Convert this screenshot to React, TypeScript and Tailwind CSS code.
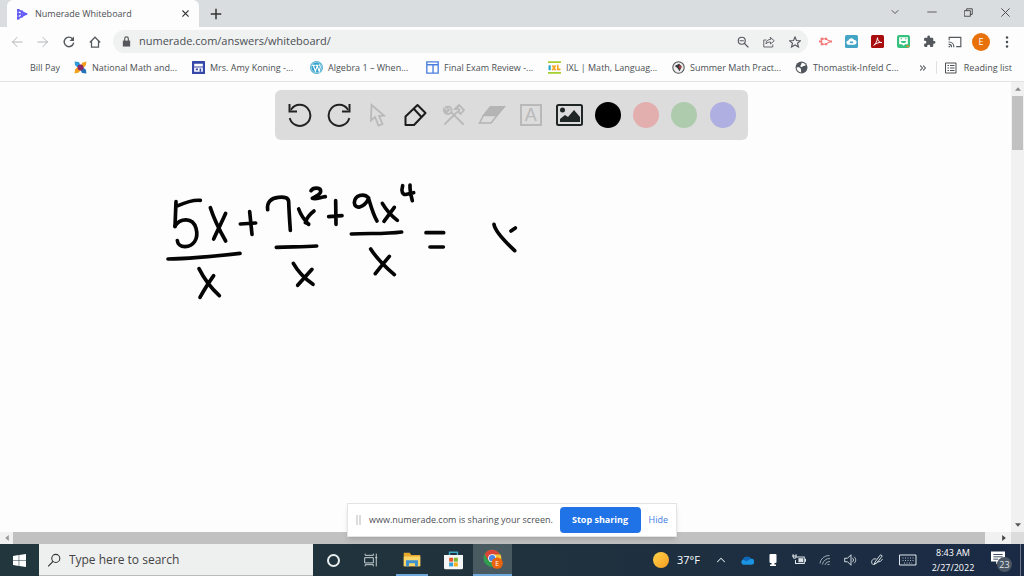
import React from 'react';
import { ChevronDown, ChevronUp, ChevronsRight } from 'lucide-react';

type IconProps = { className?: string; children?: React.ReactNode; viewBox?: string };

const Line: React.FC<IconProps> = ({ className = 'w-4 h-4', viewBox = '0 0 24 24', children }) => (
  <svg className={className} viewBox={viewBox} fill="none" stroke="currentColor" strokeWidth={2} strokeLinecap="square" aria-hidden="true">
    {children}
  </svg>
);

const bookmarks = [
  {
    label: 'National Math and...',
    width: 'w-[118px]',
    icon: (
      <svg viewBox="0 0 24 24" className="w-[13px] h-[13px] shrink-0">
        <path d="M1 1l8 1 4 7-5 4-6-5z" fill="#2f9bd8" />
        <path d="M23 1l-8 2-3 6 5 4 5-5z" fill="#f5a11c" />
        <path d="M1 23l8-2 4-6-5-5-6 5z" fill="#f5a11c" />
        <path d="M23 23l-8-1-4-7 5-4 6 5z" fill="#2673b8" />
        <circle cx="12" cy="12" r="5.5" fill="#8a2766" />
      </svg>
    ),
  },
  {
    label: 'Mrs. Amy Koning -...',
    width: 'w-[118px]',
    icon: (
      <svg viewBox="0 0 24 24" className="w-[13px] h-[13px] shrink-0">
        <rect width="24" height="24" rx="1" fill="#3547a8" />
        <path d="M4 5h16v5H4zM4 12h16v8H4z" fill="#fff" />
        <path d="M7 14h4v3H7zM14 14h3v6h-3z" fill="#3547a8" />
      </svg>
    ),
  },
  {
    label: 'Algebra 1 – When...',
    width: 'w-[116px]',
    icon: (
      <svg viewBox="0 0 24 24" className="w-[13px] h-[13px] shrink-0">
        <circle cx="12" cy="12" r="12" fill="#38a3cb" />
        <circle cx="12" cy="12" r="10" fill="none" stroke="#fff" strokeWidth="1" />
        <path d="M4 8h5M6 8l4 11 3-9M10 8h6M13 8l4 11 2-8c0-2-2-3-1-5" fill="none" stroke="#fff" strokeWidth="2" />
      </svg>
    ),
  },
  {
    label: 'Final Exam Review -...',
    width: 'w-[122px]',
    icon: (
      <svg viewBox="0 0 24 24" className="w-[13px] h-[13px] shrink-0" fill="none" stroke="#4a7ede" strokeWidth="2.5">
        <path d="M1.5 1.5h21v21h-21zM1.5 7h21M13 7v15" />
      </svg>
    ),
  },
  {
    label: 'IXL | Math, Languag...',
    width: 'w-[124px]',
    icon: (
      <svg viewBox="0 0 24 24" className="w-[13px] h-[13px] shrink-0" fill="none" strokeWidth="3">
        <path d="M0 2h24M0 22h24" stroke="#a4cf2c" />
        <path d="M3 8v9" stroke="#1fa5c8" strokeWidth="4" />
        <path d="M8 8l6 9M14 8l-6 9M18 7v8.5h5" stroke="#f3a51b" />
      </svg>
    ),
  },
  {
    label: 'Summer Math Pract...',
    width: 'w-[123px]',
    icon: (
      <svg viewBox="0 0 24 24" className="w-[13px] h-[13px] shrink-0">
        <circle cx="12" cy="12" r="10.5" fill="#eee" stroke="#555" strokeWidth="2" />
        <path d="M5 9l8-4 5 5-4 9-4-6z" fill="#35363c" />
        <path d="M12 8l6 2-4 5z" fill="#b53a3a" />
      </svg>
    ),
  },
  {
    label: 'Thomastik-Infeld C...',
    width: 'w-[112px]',
    icon: (
      <svg viewBox="0 0 24 24" className="w-[13px] h-[13px] shrink-0">
        <circle cx="12" cy="12" r="11" fill="#50555b" />
        <path d="M3 12c4-1 7 0 8 3s-1 4 1 6c-5 0-9-4-9-9zM12 3c4 0 7 2 8 5-3 2-5 0-6 2s-4 1-4-1 3-3 2-6z" fill="#fff" />
      </svg>
    ),
  },
];

const tools = [
  {
    label: 'Undo',
    color: 'text-[#222]',
    icon: (
      <Line className="w-6 h-6">
        <path d="M2 16a10.500 10.500 0 1 0 1.500-10" />
        <path d="M1.500 2v6.500h6.500" />
      </Line>
    ),
  },
  {
    label: 'Redo',
    color: 'text-[#222]',
    icon: (
      <Line className="w-6 h-6">
        <path d="M22 16a10.500 10.500 0 1 1-1.500-10" />
        <path d="M22.500 2v6.500h-6.500" />
      </Line>
    ),
  },
  {
    label: 'Select',
    color: 'text-[#b9b9b9]',
    icon: (
      <Line className="w-6 h-6">
        <path d="M6.500 2l-.5 15.500 4-3.500 3.500 8.500 4-1.500-3.500-8 5-.5z" strokeWidth={1.8} />
      </Line>
    ),
  },
  {
    label: 'Pen',
    color: 'text-[#1c1c1c]',
    icon: (
      <Line className="w-6 h-6">
        <path d="M2.500 22v-8.500L14.500 2l8 8-11.500 12zM11 6l7.500 8" strokeLinejoin="round" />
      </Line>
    ),
  },
  {
    label: 'Tools',
    color: 'text-[#b9b9b9]',
    icon: (
      <Line className="w-6 h-6">
        <path d="M3 21L14.500 9.500M9.500 9.500L21 21M4 4l3 3-2 2-3-3c-.5 4 3 6 6 4.500l1.500-1.500c1-3.500-1.500-6.500-5.500-5zM13 6l4-4 5 5-3.500 4-2.500-2.500 1.500-1.500-2-2-1 1z" strokeWidth={1.8} />
      </Line>
    ),
  },
  {
    label: 'Eraser',
    color: 'text-[#b4b4b4]',
    icon: (
      <svg viewBox="0 0 28 24" className="w-7 h-6">
        <path d="M12 3h15.500l-8.500 10H4z" fill="#b4b4b4" />
        <path d="M5.500 12.500h13.500l-6 7.500H1.500zM19 12.500L27 3" fill="none" stroke="#b4b4b4" strokeWidth="1.500" />
      </svg>
    ),
  },
  {
    label: 'Text',
    color: 'text-[#b9b9b9]',
    icon: (
      <span className="flex items-center justify-center w-[22px] h-[22px] border-2 border-[#b9b9b9] font-['Liberation_Sans'] text-lg leading-none">A</span>
    ),
  },
  {
    label: 'Image',
    color: 'text-[#202526]',
    icon: (
      <svg viewBox="0 0 28 24" className="w-7 h-6">
        <rect x="2" y="2" width="25" height="20" rx="1.500" fill="none" stroke="#202526" strokeWidth="2" />
        <circle cx="7.500" cy="7" r="2.500" fill="#202526" />
        <path d="M5 19v-3l5-4 3 2 6-7 6 7v5z" fill="#202526" />
      </svg>
    ),
  },
];

const colors = [
  { name: 'Black', bg: 'bg-black' },
  { name: 'Red', bg: 'bg-[#e3aeae]' },
  { name: 'Green', bg: 'bg-[#aecbae]' },
  { name: 'Blue', bg: 'bg-[#afafe1]' },
];

const strokes = [
  // 5x over x
  'M78 95L75 170M84 107C104 98 125 89 151 91',
  'M75 168C90 145 128 140 138 175C147 207 130 229 105 230C91 230 83 222 82 212',
  'M181 113C193 150 208 180 227 213M227 130C215 158 202 182 191 207',
  'M54 267C125 266 190 259 270 250',
  'M147 296C165 332 185 356 208 377M191 317C175 340 162 360 150 382',
  'M271 162L317 159M299 125L306 193',
  // 7x^2 over x
  'M353 119C350 97 363 84 385 82C405 80 415 83 416 95C417 125 419 153 421 181',
  'M446 117C452 134 462 149 476 163M492 123C480 132 470 143 466 158L476 162',
  'M483 62C490 51 513 52 512 65C510 75 495 80 487 85C500 88 510 82 526 80',
  'M379 232C420 230 460 231 500 228',
  'M430 280C445 307 465 326 489 343M486 298L443 346',
  'M536 140L576 137M557 92L558 163',
  // 9x^4 over x
  'M656 84C641 68 614 76 613 98C614 119 641 115 656 86C664 113 670 135 681 153',
  'M697 100C708 119 724 137 742 151M733 112L702 154',
  'M758 47C753 64 757 76 770 73L791 68M780 45C779 62 783 77 787 92',
  'M604 192C655 189 705 193 755 186',
  'M662 237C680 265 705 290 733 314M718 259C700 280 688 295 676 311',
  // = and the start of the answer
  'M828 188L881 188M840 231L880 231',
  'M1032 163C1035 185 1065 215 1094 242M1083 183L1096 174',
];

const TabStrip: React.FC = () => (
  <header className="flex h-[27px] shrink-0 bg-[#dadddf] pl-[7px]">
    <div className="flex items-center w-48 rounded-t-md bg-[#fdfdfd] pl-[9px] pr-2">
      <svg viewBox="0 0 24 24" className="w-3 h-3" fill="none" stroke="#625bf5" strokeWidth="3">
        <path d="M4 4l7 3 10 5-10 5-7 4V4M4 12h16M11 7v10" />
        <path d="M2 2h5v5H2zM2 10h5v5H2zM2 18h5v5H2zM10 5h4v4h-4zM10 15h4v4h-4zM18 10h4v4h-4z" fill="#625bf5" stroke="none" />
      </svg>
      <span className="ml-[7px] flex-1 text-[9px] text-[#4c5054] whitespace-nowrap">Numerade Whiteboard</span>
      <button aria-label="Close tab" className="text-[#333] p-0.5">
        <Line className="w-[7px] h-[7px]"><path d="M3 3l18 18M21 3L3 21" strokeWidth={4} /></Line>
      </button>
    </div>
    <button aria-label="New tab" className="w-[34px] flex items-center justify-center text-[#333]">
      <Line className="w-3 h-3"><path d="M12 3v18M3 12h18" strokeWidth={3} /></Line>
    </button>
    <div className="ml-auto flex h-6 text-[#444]">
      <button aria-label="Search tabs" className="w-[37px] flex items-center justify-center"><ChevronDown className="w-3 h-3" strokeWidth={1.8} /></button>
      <button aria-label="Minimize" className="w-[37px] flex items-center justify-center"><Line className="w-2.5 h-2.5"><path d="M2 12h20" /></Line></button>
      <button aria-label="Restore" className="w-[37px] flex items-center justify-center"><Line className="w-[9px] h-[9px]"><path d="M2 7h15v15H2zM7 7V2h15v15h-5" strokeWidth={2.4} /></Line></button>
      <button aria-label="Close" className="w-[37px] flex items-center justify-center"><Line className="w-[9px] h-[9px]"><path d="M2 2l20 20M22 2L2 22" strokeWidth={2.5} /></Line></button>
    </div>
  </header>
);

const AddressBar: React.FC = () => (
  <nav className="flex items-center h-[29px] shrink-0 bg-[#fdfdfd] px-1 text-[#55595d]">
    <button aria-label="Back" className="w-[26px] flex justify-center text-[#b4b6b8]"><Line className="w-3 h-3"><path d="M22 12H3M12 3l-9 9 9 9" /></Line></button>
    <button aria-label="Forward" className="w-[26px] flex justify-center text-[#b4b6b8]"><Line className="w-3 h-3"><path d="M2 12h19M12 3l9 9-9 9" /></Line></button>
    <button aria-label="Reload" className="w-[26px] flex justify-center"><Line className="w-3 h-3"><path d="M21 14.500a9.500 9.500 0 1 1-2-9" strokeWidth={2.8} /><path d="M22 1v9h-9z" fill="currentColor" stroke="none" /></Line></button>
    <button aria-label="Home" className="w-[26px] flex justify-center"><Line className="w-3 h-3"><path d="M2.500 12L12 2.500l9.500 9.500M5 11v11h14V11" strokeWidth={2.5} /></Line></button>
    <div className="ml-[5px] flex flex-1 items-center h-[23px] rounded-full bg-[#f0f2f2] pl-2">
      <svg viewBox="0 0 24 24" className="w-[11px] h-[11px] shrink-0"><path d="M4 10h16v13H4z" fill="#55595d" /><path d="M8 11V6a4 4 0 0 1 8 0v5" fill="none" stroke="#55595d" strokeWidth="2.500" /></svg>
      <input aria-label="Address" defaultValue="numerade.com/answers/whiteboard/" className="ml-[7px] flex-1 bg-transparent text-[11px] text-[#4a4e52] outline-none" />
      <button aria-label="Zoom" className="w-[26px] flex justify-center"><Line className="w-3 h-3"><circle cx="9.500" cy="9.500" r="7" strokeWidth={2.3} /><path d="M15 15l7 7M6.500 9.500h6" strokeWidth={2.3} /></Line></button>
      <button aria-label="Share" className="w-[26px] flex justify-center"><Line className="w-3 h-3"><path d="M6 8H1.500v14h18v-4M15 3l7.500 6.500L15 16v-4c-4 0-7 1-9 4 0-6 4-9 9-9.500z" strokeWidth={1.8} /></Line></button>
      <button aria-label="Bookmark" className="w-[26px] flex justify-center"><Line className="w-3 h-3"><path d="M12 2l3 7 8 .5-6 5 2 7.500-7-4-7 4 2-7.500-6-5L9 9z" strokeWidth={2.2} /></Line></button>
    </div>
    <div className="flex items-center ml-1">
      <button aria-label="Screen capture" className="w-[26px] flex justify-center">
        <svg viewBox="0 0 24 24" className="w-[13px] h-[13px]" fill="none" stroke="#f27676" strokeWidth="2"><path d="M5 7h7l9 5-9 5H5V7M1 12h4" /><path d="M3 5h5v4H3zM0 10h4v4H0zM3 15h5v4H3zM11 5h4v4h-4zM11 15h4v4h-4zM20 10h4v4h-4z" fill="#f27676" stroke="none" /></svg>
      </button>
      <button aria-label="Cloud" className="w-[26px] flex justify-center">
        <svg viewBox="0 0 24 24" className="w-[13px] h-[13px]"><rect width="24" height="24" rx="3" fill="#43a4c6" /><path d="M7 18a4 4 0 0 1-1-8 6 6 0 0 1 11-1 4.500 4.500 0 0 1 0 9z" fill="#fff" /><path d="M9 12h6v3H9z" fill="#43a4c6" /></svg>
      </button>
      <button aria-label="Acrobat" className="w-[26px] flex justify-center">
        <svg viewBox="0 0 24 24" className="w-[13px] h-[13px]"><rect width="24" height="24" rx="3" fill="#a90e0e" /><path d="M5 19c3-2 6-7 7-14 0 6 4 9 8 9-5-1-10 1-15 5z" fill="none" stroke="#fff" strokeWidth="1.800" /></svg>
      </button>
      <button aria-label="Bitmoji" className="w-[26px] flex justify-center">
        <svg viewBox="0 0 24 24" className="w-[13px] h-[13px]"><rect width="24" height="24" rx="4" fill="#36c07d" /><path d="M4 4h16v13h-5l-3 3-3-3H4z" fill="#fff" /><path d="M8 6v2M16 6v2" stroke="#36c07d" strokeWidth="2.500" /><path d="M7 11h10c0 5-10 5-10 0z" fill="#36c07d" /><path d="M16 21l3-2 4 1-2 3z" fill="#e8892b" /></svg>
      </button>
      <button aria-label="Extensions" className="w-[26px] flex justify-center">
        <svg viewBox="0 0 24 24" className="w-[13px] h-[13px]" fill="#55595d"><path d="M20.500 11H19V7a2 2 0 0 0-2-2h-4V3.500a2.500 2.500 0 0 0-5 0V5H4a2 2 0 0 0-2 2v3.800h1.500a2.700 2.700 0 0 1 0 5.400H2V20a2 2 0 0 0 2 2h3.800v-1.500a2.700 2.700 0 0 1 5.400 0V22H17a2 2 0 0 0 2-2v-4h1.500a2.500 2.500 0 0 0 0-5z" /></svg>
      </button>
      <button aria-label="Cast" className="w-[26px] flex justify-center"><Line className="w-[14px] h-[14px]"><path d="M2 8V4h20v16h-7M2 12a8 8 0 0 1 8 8M2 16a4 4 0 0 1 4 4M2 20h.5" /></Line></button>
      <button aria-label="Profile" className="w-[26px] flex justify-center">
        <span className="flex items-center justify-center w-[18px] h-[18px] rounded-full bg-[#e8710a] text-white text-[9px] leading-none">E</span>
      </button>
      <button aria-label="Menu" className="w-[26px] flex justify-center">
        <svg viewBox="0 0 24 24" className="w-3 h-3" fill="#4a4e52"><circle cx="12" cy="3" r="2.500" /><circle cx="12" cy="12" r="2.500" /><circle cx="12" cy="21" r="2.500" /></svg>
      </button>
    </div>
  </nav>
);

const Bookmarks: React.FC = () => (
  <nav className="flex items-center h-[26px] shrink-0 pb-0.5 bg-[#fdfdfd] border-b border-[#e2e3e4] pl-[30px] pr-3 text-[9px] text-[#4c5054] whitespace-nowrap">
    <a href="#bill-pay" className="w-[44px]">Bill Pay</a>
    {bookmarks.map((b) => (
      <a key={b.label} href="#bookmark" className={`flex items-center gap-[5px] ${b.width}`}>
        {b.icon}
        {b.label}
      </a>
    ))}
    <button aria-label="More bookmarks" className="ml-auto px-2"><ChevronsRight className="w-2.5 h-2.5" strokeWidth={2.5} /></button>
    <button className="flex items-center gap-[7px] border-l border-[#e0e1e2] pl-2">
      <Line className="w-3 h-3"><path d="M2 2h20v20H2zM6 7h1M6 12h1M6 17h1M11 7h7M11 12h7M11 17h7" /></Line>
      Reading list
    </button>
  </nav>
);

const Whiteboard: React.FC = () => (
  <main className="relative flex flex-1 min-h-0 bg-[#fdfdfd]">
    <div className="flex-1 pl-3 pt-2">
      <div className="mx-auto grid grid-cols-12 items-center w-[473px] h-[50px] px-1.5 rounded-md bg-[#dcdcdc]">
        {tools.map((t) => (
          <button key={t.label} aria-label={t.label} className={`flex justify-center ${t.color}`}>
            {t.icon}
          </button>
        ))}
        {colors.map((c) => (
          <button key={c.name} aria-label={c.name} className={`justify-self-center w-[26px] h-[26px] rounded-full ${c.bg}`} />
        ))}
      </div>
      <svg viewBox="0 0 1200 420" className="absolute left-[150px] top-[88px] w-[400px] h-[140px]" fill="none" stroke="#050505" strokeWidth="11" strokeLinecap="round" strokeLinejoin="round">
        {strokes.map((d) => (
          <path key={d} d={d} />
        ))}
      </svg>
    </div>
    <div className="flex flex-col items-center w-[13px] bg-[#f1f1f1] py-1">
      <svg viewBox="0 0 10 10" className="w-1.5 h-1.5" fill="#888"><path d="M0 8l5-6 5 6z" /></svg>
      <div className="mt-1 w-[11px] h-[54px] bg-[#c1c1c1]" />
      <svg viewBox="0 0 10 10" className="mt-auto w-1.5 h-1.5" fill="#555"><path d="M0 2l5 6 5-6z" /></svg>
    </div>
  </main>
);

const SharingBar: React.FC = () => (
  <div className="absolute left-1/2 -translate-x-1/2 bottom-[39px] flex items-center w-[330px] h-[34px] bg-white border border-[#e4e4e4] shadow-md px-2 text-[9px] whitespace-nowrap">
    <span className="w-[5px] h-2.5 border-x-2 border-[#dcdcdc]" />
    <span className="ml-2 text-[#4c5054]">www.numerade.com is sharing your screen.</span>
    <button className="ml-auto shrink-0 w-[81px] h-[26px] rounded-sm bg-[#1f73e6] text-white font-bold">Stop sharing</button>
    <button className="ml-2 text-[#3b7ce6]">Hide</button>
  </div>
);

const Taskbar: React.FC = () => (
  <footer className="flex items-stretch h-8 shrink-0 bg-linear-to-r from-[#22373d] via-[#20323d] to-[#1a2a45] text-white">
    <button aria-label="Start" className="w-[39px] flex items-center justify-center">
      <svg viewBox="0 0 24 24" className="w-[13px] h-[13px]" fill="#fff"><path d="M0 3.500l10.500-1.500v9.500H0zM11.500 1.800L24 0v11.500H11.500zM0 12.500h10.500V22L0 20.500zM11.500 12.500H24V24l-12.500-1.800z" /></svg>
    </button>
    <label className="flex items-center w-[274px] bg-[#eeefef] border-b border-[#bbb] pl-[9px] text-[#333]">
      <Line className="w-3.5 h-3.5"><circle cx="14.500" cy="9" r="7.500" /><path d="M9 15l-8 8" /></Line>
      <input aria-label="Search" placeholder="Type here to search" className="ml-2 w-full bg-transparent text-xs placeholder:text-[#444] outline-none" />
    </label>
    <button aria-label="Cortana" className="w-10 flex items-center justify-center"><span className="w-[13px] h-[13px] rounded-full border-2 border-[#e8eeee]" /></button>
    <button aria-label="Task view" className="w-9 flex items-center justify-center text-[#c7d0d2]">
      <Line className="w-3.5 h-3.5"><path d="M2 2v2h14V2M2 8h14v9H2zM2 22v-2h14v2M21 2v20M20 8h2" strokeWidth={1.7} /></Line>
    </button>
    <button aria-label="File Explorer" className="w-[45px] flex items-center justify-center">
      <span className="flex items-center justify-center w-8 h-full border-b-2 border-[#6fa9dc]">
        <svg viewBox="0 0 24 20" className="w-[18px] h-[15px]"><path d="M1 1h8l2 3h12v15H1z" fill="#e9a92c" /><path d="M1 6h22v13H1z" fill="#fbd668" /><path d="M4 19v-8h16v8h-4v-4H8v4z" fill="#3f93cf" /></svg>
      </span>
    </button>
    <button aria-label="Microsoft Store" className="w-[38px] flex items-center justify-center">
      <svg viewBox="0 0 24 24" className="w-[19px] h-[19px]"><path d="M7 5V1.500h10V5" fill="none" stroke="#3fa9c9" strokeWidth="1.800" /><path d="M0 5h24v16a2 2 0 0 1-2 2H2a2 2 0 0 1-2-2z" fill="#f5f7f7" /><path d="M6.500 8.500h5v5h-5z" fill="#e8542d" /><path d="M12.500 8.500h5v5h-5z" fill="#7fb62c" /><path d="M6.500 14.500h5v5h-5z" fill="#35a0d6" /><path d="M12.500 14.500h5v5h-5z" fill="#f3b21f" /></svg>
    </button>
    <button aria-label="Chrome" className="ml-px w-[39px] flex items-center justify-center bg-[#4a5a61] border-b-2 border-[#6fa9dc]">
      <svg viewBox="0 0 24 24" className="w-5 h-5">
        <circle cx="11" cy="11" r="10.500" fill="#2f9e4f" />
        <path d="M2 6a10.500 10.500 0 0 1 18.500 1H11l-4.500 7z" fill="#dc4437" />
        <path d="M11 6.500h10a10.500 10.500 0 0 1-9 15z" fill="#f5c33b" />
        <circle cx="11" cy="11" r="4.800" fill="#fff" />
        <circle cx="11" cy="11" r="3.800" fill="#4a86e8" />
        <circle cx="17" cy="17" r="6.800" fill="#e8640d" />
        <text x="17" y="20" fontSize="8" textAnchor="middle" fill="#fff">E</text>
      </svg>
    </button>
    <button className="ml-auto mr-2 flex items-center gap-2 text-[11px] whitespace-nowrap">
      <span className="w-4 h-4 rounded-full bg-linear-to-br from-[#ffd54a] to-[#f59a1d]" />
      37°F
    </button>
    <div className="flex items-center text-[#dfe6ea]">
      <span className="w-[26px] flex justify-center"><ChevronUp className="w-3.5 h-3.5" strokeWidth={1.8} /></span>
      <span className="w-[26px] flex justify-center">
        <svg viewBox="0 0 24 16" className="w-[14px] h-[10px]"><path d="M5 16a5 5 0 0 1 0-9A8 8 0 0 1 19 6a5 5 0 0 1 1 10z" fill="#1a93e0" /><path d="M5 7a8 8 0 0 1 14-1l-8 4z" fill="#0f66b8" /></svg>
      </span>
      <span className="w-[26px] flex justify-center">
        <svg viewBox="0 0 16 24" className="w-2 h-3" fill="#fff"><rect x="1" y="0" width="14" height="18" rx="2" /><path d="M5 18h6v3h3v3H2v-3h3z" /></svg>
      </span>
      <span className="w-[26px] flex justify-center">
        <Line className="w-[14px] h-[14px]"><path d="M8 7h13v11H6v-5M1 5h6M2 3v3c0 4 5 4 5 0V3" strokeWidth={1.8} /><path d="M12 10h6v5h-6zM23 11v3" fill="currentColor" /></Line>
      </span>
      <span className="w-[26px] flex justify-center text-[#a9b4bd]">
        <Line className="w-3 h-3"><path d="M2 18A17 17 0 0 1 20 3M7 20A13 13 0 0 1 21 9M12 21a9 9 0 0 1 9-6M18 21h2" strokeWidth={1.8} /></Line>
      </span>
      <span className="w-[26px] flex justify-center">
        <Line className="w-3.5 h-3.5"><path d="M2 9h4l6-6v18l-6-6H2z" strokeWidth={1.6} /><path d="M15 9c2 2 2 4 0 6M18 7c3 3 3 7 0 10" strokeWidth={1.4} /></Line>
      </span>
      <span className="w-[26px] flex justify-center">
        <Line className="w-3.5 h-3.5"><path d="M9 15L18 3l3 2-9 12-4 2zM10 10c-5-1-8 3-7 7 1 4 5 3 7 0M13 15c3 1 7-1 8-4" strokeWidth={1.6} /></Line>
      </span>
      <span className="w-9 flex justify-center">
        <Line viewBox="0 0 36 24" className="w-[18px] h-3"><path d="M2 2h32v20H2z" strokeWidth={2} /><path d="M7 8h22M7 13h22M10 18h16" strokeWidth={1.5} strokeDasharray="2 3" strokeLinecap="butt" /></Line>
      </span>
      <span className="w-[54px] flex flex-col items-center text-[9px] leading-[15px] text-white whitespace-nowrap">
        <span>8:43 AM</span>
        <span>2/27/2022</span>
      </span>
      <button aria-label="Notifications" className="relative w-10 h-full flex items-center justify-center">
        <svg viewBox="0 0 24 24" className="mr-1 mb-1 w-3.5 h-3.5"><path d="M0 1h24v17H13l-4 5v-5H0z" fill="#fff" /><path d="M4 6h16M4 10h16M4 14h8" stroke="#24344c" strokeWidth="1.500" /></svg>
        <span className="absolute right-2 bottom-1 flex items-center justify-center w-[15px] h-[15px] rounded-full bg-[#4a5563] text-[9px] leading-none">23</span>
      </button>
      <span className="w-1 h-full border-l border-[#6c7889]" />
    </div>
  </footer>
);

const App: React.FC = () => (
  <div className="relative flex flex-col h-screen overflow-hidden font-['Open_Sans','Noto_Sans',sans-serif]">
    <TabStrip />
    <AddressBar />
    <Bookmarks />
    <Whiteboard />
    <div className="flex items-center h-3 shrink-0 bg-[#f1f1f1]">
      <span className="w-[13px] flex justify-center"><svg viewBox="0 0 10 10" className="w-1.5 h-1.5" fill="#999"><path d="M8 0L2 5l6 5z" /></svg></span>
      <div className="flex-1 h-full bg-[#c1c1c1]" />
      <span className="w-[26px] flex justify-end pr-1"><svg viewBox="0 0 10 10" className="w-1.5 h-1.5" fill="#444"><path d="M2 0l6 5-6 5z" /></svg></span>
      <span className="w-[13px] h-full bg-[#dcdcdc]" />
    </div>
    <Taskbar />
    <SharingBar />
  </div>
);

export default App;
